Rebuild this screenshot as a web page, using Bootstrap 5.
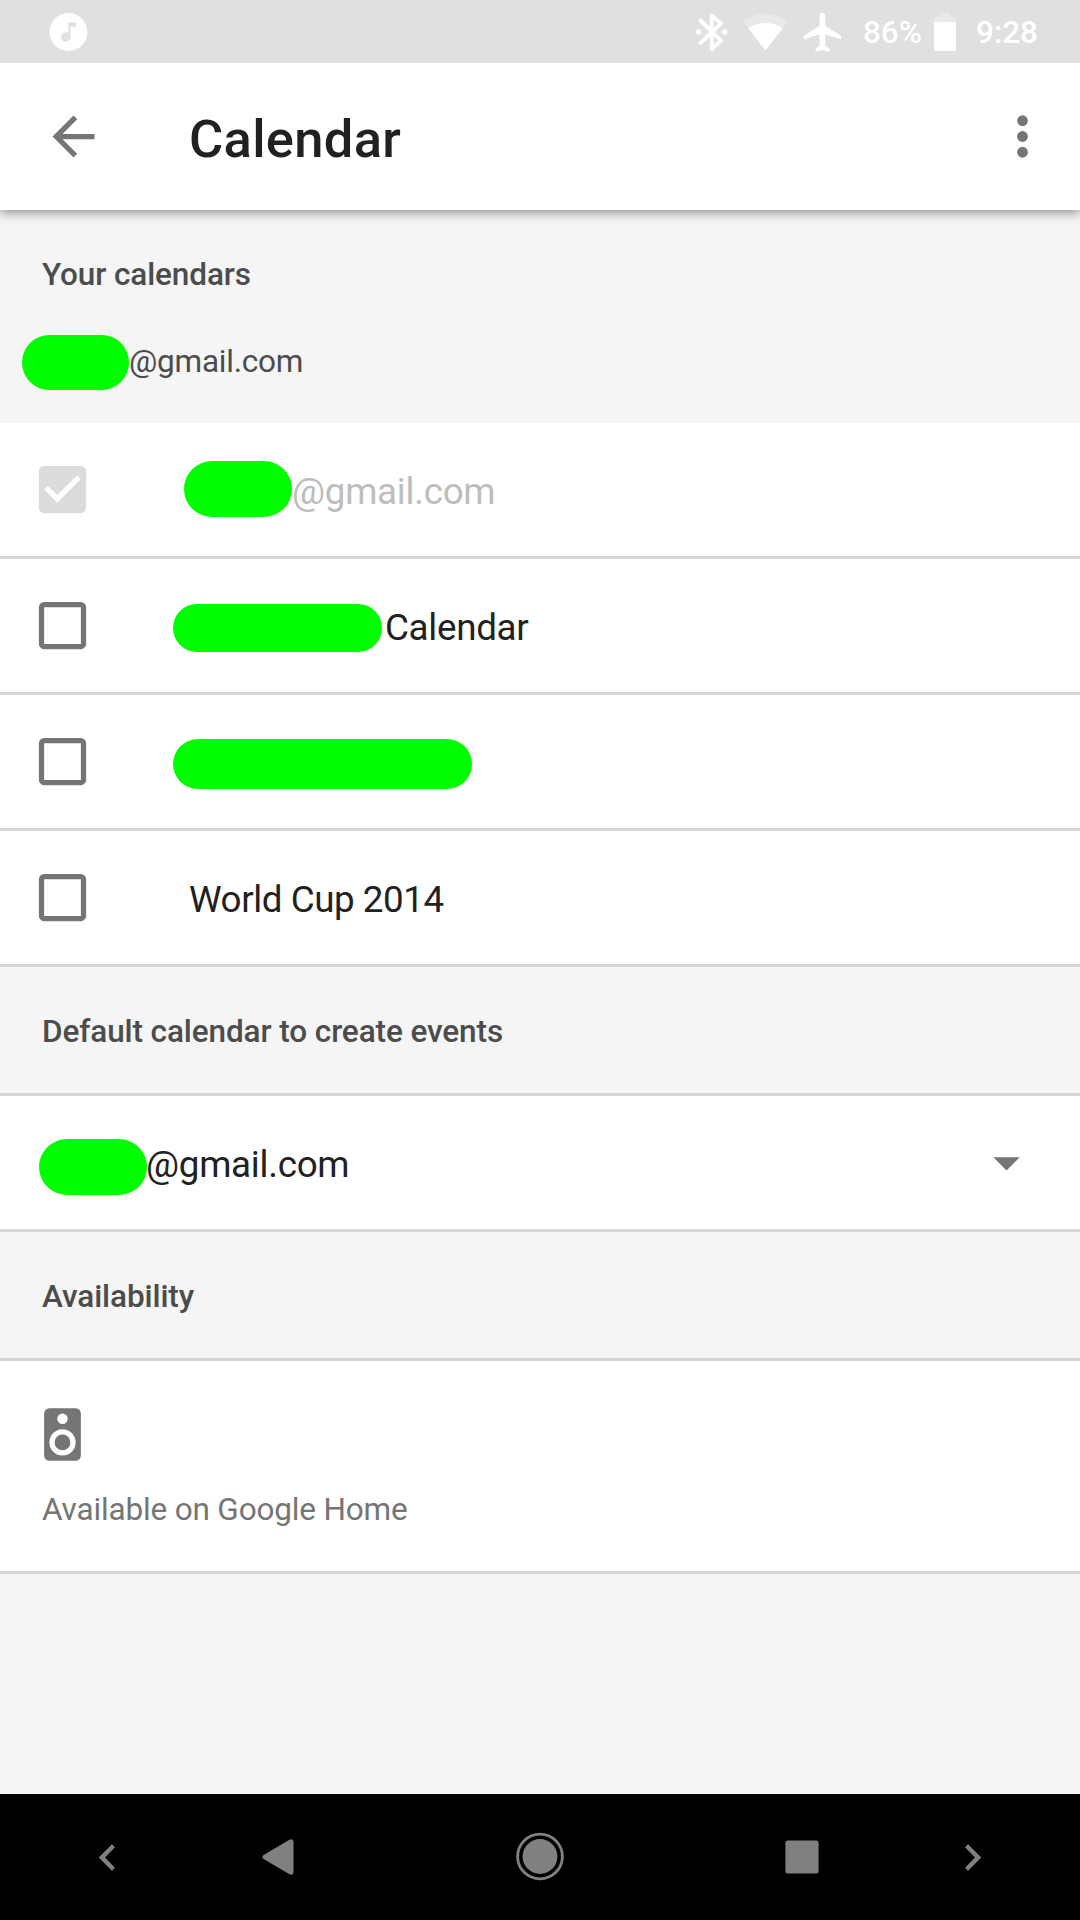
<!DOCTYPE html>
<html lang="en">
<head>
<meta charset="utf-8">
<meta name="viewport" content="width=device-width, initial-scale=1">
<title>Calendar</title>
<link href="https://cdn.jsdelivr.net/npm/bootstrap@5.3.0/dist/css/bootstrap.min.css" rel="stylesheet">
<style>
  body { font-family: Roboto, "Liberation Sans", sans-serif; color: #212121; background: #f5f5f5; line-height: 1; }
  svg { display: block; flex: none; }
  .screen { height: 1920px; overflow: hidden; }
  .status-bar { height: 63px; background: #e0e0e0; color: #fff; font-size: 31.5px; font-weight: 500; padding: 0 42px 0 48px; z-index: 3; }
  .status-bar span { padding-top: 2px; }
  .status-bar .wifi { margin-left: 15px; }
  .status-bar .plane { margin-left: 15px; }
  .status-bar .percent { margin-left: 21px; }
  .status-bar .battery { margin-left: 12px; }
  .status-bar .clock { margin-left: 20px; }
  .app-bar { height: 147px; padding: 0 26px 0 42px; box-shadow: 0 3px 10px rgba(0,0,0,.4); z-index: 2; }
  .app-title { font-size: 52.5px; font-weight: 500; line-height: 62px; margin: 5px 0 0 84px; letter-spacing: .3px; }
  .gray-icon { fill: #757575; }
  .section-head { font-size: 31.5px; font-weight: 500; color: #4c4c4c; height: 129px; padding: 4px 42px 0; border-bottom: 3px solid #d6d6d6; letter-spacing: -.1px; }
  .account-head { height: 213px; color: #4c4c4c; font-size: 31.5px; }
  .account-title { font-weight: 500; line-height: 40px; padding: 45px 42px 0; letter-spacing: -.12px; }
  .account-mail { margin-top: 40px; height: 55px; padding-left: 22px; }
  .account-name { padding-bottom: 1px; letter-spacing: -.22px; }
  .setting-row { height: 136px; border-bottom: 3px solid #d6d6d6; font-size: 36.75px; }
  .setting-row .tick { margin: -1px 0 0 31px; }
  .row-label { padding-top: 6px; white-space: nowrap; letter-spacing: -.25px; }
  .mail-muted { color: #bdbdbd; }
  .label-cal { padding-left: 3px; letter-spacing: -.3px; }
  .label-cup { margin-left: 95px; letter-spacing: -.43px; }
  .label-default { margin-left: -1px; }
  .drop { margin-right: 42px; }
  .redacted { background: #00fe00; border-radius: 28px; flex: none; align-self: flex-start; }
  .r-head { width: 107px; height: 55px; }
  .r-mail { width: 108px; height: 56px; margin: 38px 0 0 90px; }
  .r-cal { width: 209px; height: 48px; margin: 45px 0 0 79px; border-radius: 24px; }
  .r-name { width: 299px; height: 50px; margin: 44px 0 0 79px; border-radius: 25px; }
  .r-default { width: 108px; height: 56px; margin: 43px 0 0 39px; }
  .available { height: 213px; border-bottom: 3px solid #d6d6d6; padding: 42px 31px 0; font-size: 31.5px; color: #757575; letter-spacing: -.16px; }
  .available-text { padding-left: 11px; margin-top: 24px; line-height: 40px; }
  .nav-keys { height: 126px; background: #000; }
  .nav-keys svg { fill: #808080; }
  .key-side { width: 147px; }
  .key-main { width: 262px; }
  .key-prev { margin-right: 13px; }
  .key-next { margin-left: 13px; }
  .key-home { margin-right: 1px; }
</style>
<script src="https://cdn.jsdelivr.net/npm/bootstrap@5.3.0/dist/js/bootstrap.bundle.min.js"></script>
</head>
<body>
<div class="screen d-flex flex-column">

  <div class="status-bar d-flex align-items-center position-relative">
    <svg width="40" height="40" viewBox="0 0 40 40"><circle cx="20.4" cy="20" r="19" fill="#fff"/><path fill="#e0e0e0" d="M20.2 10.5H28v4.300h-5.500v10.200a4.700 4.700 0 1 1-2.300-4z"/></svg>
    <svg class="ms-auto" width="32" height="38" viewBox="0 0 32 38"><path d="M4.500 7.500 25 27.500 15.700 36V2.500L25 10.500 4.500 30" fill="none" stroke="#fff" stroke-width="3.900" stroke-linejoin="round" stroke-linecap="round"/><circle cx="2.700" cy="19" r="2.700" fill="#fff"/><circle cx="28.700" cy="19" r="2.700" fill="#fff"/></svg>
    <svg class="wifi" width="45" height="38" viewBox="0 0 45 38"><path fill="#fff" fill-opacity=".3" d="M.5 9C7 3.500 14.500.8 22.500.8S38 3.500 44.500 9L39.600 15.200C34.500 11.500 29 9.900 22.500 9.900S10.500 11.500 5.400 15.200z"/><path fill="#fff" d="M5.400 15.200C10.500 11.500 16 9.900 22.500 9.900s12 1.600 17.100 5.300L24 35.800q-1.500 2-3 0z"/></svg>
    <svg class="plane" width="39" height="40" viewBox="0 0 39 40"><path fill="#fff" d="M22.200 3.500a2.800 2.800 0 0 0-5.600 0v10.300L1.600 23.300q-.8.600-.8 1.600v2.600l15.800-5v11.300l-4 2.900v3l7-1.800 7 1.800v-3l-4.400-2.900V22.500L38.200 27.500v-2.600q0-1-.8-1.600L22.200 13.800z"/></svg>
    <span class="percent">86%</span>
    <svg class="battery" width="22" height="38" viewBox="0 0 22 38"><path fill="#fff" fill-opacity=".3" d="M6 0h10v4h4.500Q22 4 22 5.500V9H0V5.500Q0 4 1.500 4H6z"/><path fill="#fff" d="M0 9h22v27.500q0 1.500-1.500 1.500h-19Q0 38 0 36.500z"/></svg>
    <span class="clock">9:28</span>
  </div>

  <header class="app-bar bg-white d-flex align-items-center position-relative">
    <svg class="gray-icon" width="63" height="63" viewBox="0 0 24 24"><path d="M20 11H7.830l5.590-5.590L12 4l-8 8 8 8 1.410-1.410L7.830 13H20z"/></svg>
    <h1 class="app-title">Calendar</h1>
    <svg class="gray-icon ms-auto" width="63" height="63" viewBox="0 0 24 24"><circle cx="12" cy="6" r="2.050"/><circle cx="12" cy="12" r="2.050"/><circle cx="12" cy="18" r="2.050"/></svg>
  </header>

  <main class="flex-grow-1">
    <div class="account-head">
      <div class="account-title">Your calendars</div>
      <div class="account-mail d-flex align-items-center"><span class="redacted r-head"></span><span class="account-name">@gmail.com</span></div>
    </div>

    <div class="setting-row bg-white d-flex align-items-center">
      <svg class="tick" width="63" height="63" viewBox="0 0 24 24"><path fill="#dcdcdc" d="M19 3H5a2 2 0 0 0-2 2v14a2 2 0 0 0 2 2h14a2 2 0 0 0 2-2V5a2 2 0 0 0-2-2zm-9 14-5-5 1.410-1.410L10 14.170l7.590-7.590L19 8z"/></svg>
      <span class="redacted r-mail"></span><span class="row-label mail-muted">@gmail.com</span>
    </div>
    <div class="setting-row bg-white d-flex align-items-center">
      <svg class="tick gray-icon" width="63" height="63" viewBox="0 0 24 24"><path d="M19 5v14H5V5h14m0-2H5a2 2 0 0 0-2 2v14a2 2 0 0 0 2 2h14a2 2 0 0 0 2-2V5a2 2 0 0 0-2-2z"/></svg>
      <span class="redacted r-cal"></span><span class="row-label label-cal">Calendar</span>
    </div>
    <div class="setting-row bg-white d-flex align-items-center">
      <svg class="tick gray-icon" width="63" height="63" viewBox="0 0 24 24"><path d="M19 5v14H5V5h14m0-2H5a2 2 0 0 0-2 2v14a2 2 0 0 0 2 2h14a2 2 0 0 0 2-2V5a2 2 0 0 0-2-2z"/></svg>
      <span class="redacted r-name"></span>
    </div>
    <div class="setting-row bg-white d-flex align-items-center">
      <svg class="tick gray-icon" width="63" height="63" viewBox="0 0 24 24"><path d="M19 5v14H5V5h14m0-2H5a2 2 0 0 0-2 2v14a2 2 0 0 0 2 2h14a2 2 0 0 0 2-2V5a2 2 0 0 0-2-2z"/></svg>
      <span class="row-label label-cup">World Cup 2014</span>
    </div>

    <div class="section-head d-flex align-items-center">Default calendar to create events</div>
    <div class="setting-row bg-white d-flex align-items-center">
      <span class="redacted r-default"></span><span class="row-label label-default">@gmail.com</span>
      <svg class="gray-icon ms-auto drop" width="63" height="63" viewBox="0 0 24 24"><path d="m7 10 5 5 5-5z"/></svg>
    </div>

    <div class="section-head d-flex align-items-center">Availability</div>
    <div class="available bg-white">
      <svg class="gray-icon" width="63" height="63" viewBox="0 0 24 24"><path fill-rule="evenodd" d="M7 2h10a2 2 0 0 1 2 2v16a2 2 0 0 1-2 2H7a2 2 0 0 1-2-2V4a2 2 0 0 1 2-2zm5 2a2 2 0 1 0 0 4 2 2 0 0 0 0-4zm0 6a5 5 0 1 0 0 10 5 5 0 0 0 0-10zm0 2a3 3 0 1 1 0 6 3 3 0 0 1 0-6z"/></svg>
      <div class="available-text">Available on Google Home</div>
    </div>
  </main>

  <nav class="nav-keys d-flex align-items-center">
    <div class="key-side d-flex justify-content-end"><svg width="53" height="53" viewBox="0 0 24 24" class="key-prev"><path d="M15.410 7.410 14 6l-6 6 6 6 1.410-1.410L10.830 12z"/></svg></div>
    <div class="key-main d-flex justify-content-center"><svg width="32" height="36" viewBox="0 0 32 36"><path d="M1.600 16 27.500.8Q31.500-.8 31.500 3v30q0 3.800-4 2.200L1.600 20q-2.600-2 0-4z"/></svg></div>
    <div class="key-main d-flex justify-content-center"><svg class="key-home" width="50" height="50" viewBox="0 0 50 50"><circle cx="25" cy="24.500" r="17.400"/><circle cx="25" cy="24.500" r="22.400" style="fill:none" stroke="#808080" stroke-width="2.900"/></svg></div>
    <div class="key-main d-flex justify-content-center"><svg width="34" height="34" viewBox="0 0 34 34"><rect x=".4" y=".4" width="33.200" height="33.200" rx="2.500"/></svg></div>
    <div class="key-side"><svg width="53" height="53" viewBox="0 0 24 24" class="key-next"><path d="M8.590 16.590 13.170 12 8.590 7.410 10 6l6 6-6 6z"/></svg></div>
  </nav>
</div>
</body>
</html>
